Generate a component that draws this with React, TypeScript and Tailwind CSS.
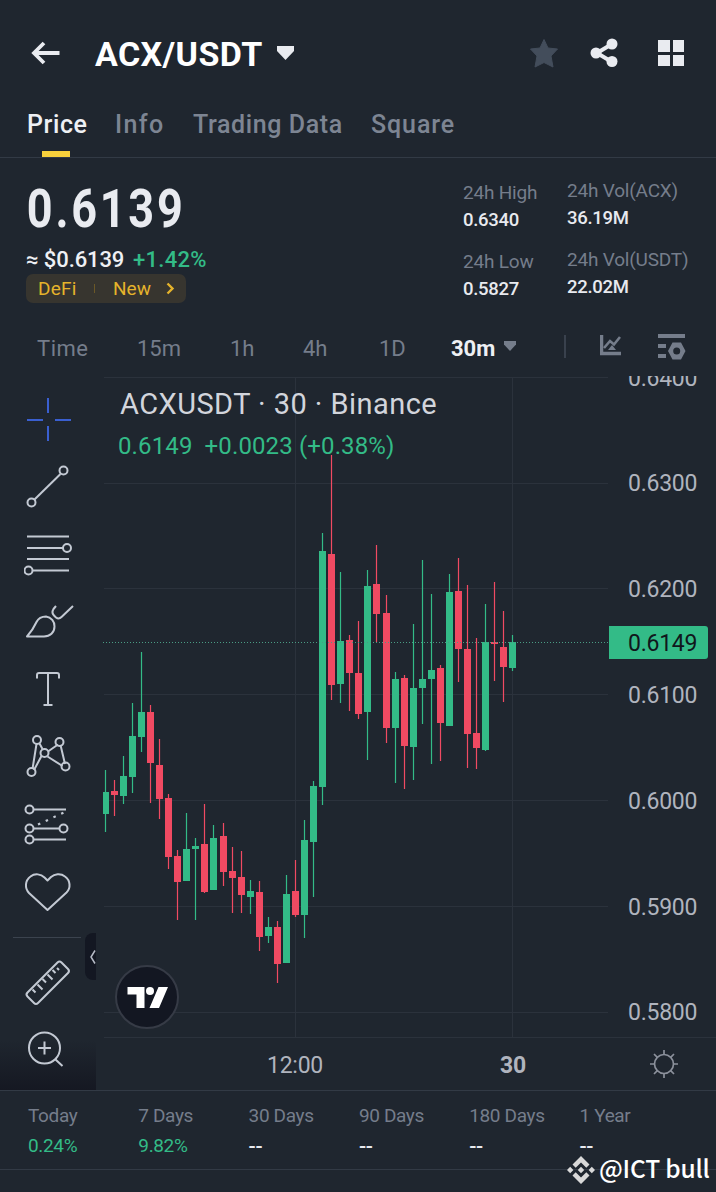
import React from 'react';

const GREEN = '#33bb87';
const RED = '#f04a62';

// center x, high, body top, body bottom, low, rising
const candles: [number, number, number, number, number, boolean][] = [
  [105.5, 770, 792, 814, 832, true],
  [114.5, 780, 791, 795, 816, false],
  [123.5, 756, 776, 796, 804, true],
  [132.5, 703, 736, 777, 793, true],
  [141.5, 652, 712, 737, 752, true],
  [150.5, 705, 712, 763, 803, false],
  [159.5, 739, 765, 799, 819, false],
  [168.5, 794, 798, 857, 869, false],
  [177.5, 850, 856, 882, 920, false],
  [186.5, 813, 849, 881, 881, true],
  [195.5, 838, 846, 849, 920, true],
  [204.5, 804, 844, 892, 893, false],
  [213.5, 825, 838, 890, 890, true],
  [223.5, 823, 836, 872, 886, false],
  [232.5, 847, 871, 878, 913, false],
  [241.5, 851, 877, 895, 913, false],
  [250.5, 880, 891, 897, 914, true],
  [259.5, 881, 892, 937, 951, false],
  [268.5, 917, 927, 936, 943, true],
  [277.5, 921, 927, 964, 983, false],
  [286.5, 875, 894, 963, 963, true],
  [295.5, 860, 891, 915, 917, false],
  [304.5, 820, 840, 915, 938, true],
  [313.5, 781, 786, 842, 897, true],
  [322.5, 533, 551, 787, 805, true],
  [331.5, 455, 554, 685, 700, false],
  [340.5, 572, 641, 684, 703, true],
  [349.5, 635, 640, 673, 711, false],
  [358.5, 621, 673, 714, 719, false],
  [367.5, 570, 586, 712, 760, true],
  [376.5, 545, 584, 614, 642, false],
  [386.5, 595, 613, 728, 743, false],
  [395.5, 672, 679, 728, 783, true],
  [404.5, 675, 678, 746, 789, false],
  [413.5, 624, 688, 747, 780, true],
  [422.5, 560, 679, 688, 724, true],
  [431.5, 594, 670, 679, 764, true],
  [440.5, 665, 668, 723, 761, false],
  [449.5, 574, 592, 726, 726, true],
  [458.5, 558, 591, 649, 682, false],
  [467.5, 585, 649, 734, 768, false],
  [476.5, 638, 733, 748, 769, false],
  [485.5, 604, 642, 750, 751, true],
  [494.5, 582, 642, 644, 681, false],
  [503.5, 611, 647, 667, 702, false],
  [512.5, 635, 642, 668, 671, true],
];

const tools = [
  { name: 'cross', icon: <path d="M24 3v15M24 31v15M3 25h16M31 25h16" stroke="#3a5fd0" /> },
  {
    name: 'trend line',
    icon: (
      <>
        <path d="M10.500 37.500 36.500 12" />
        <circle cx="7.500" cy="40.500" r="4" />
        <circle cx="39.500" cy="8.500" r="4" />
      </>
    ),
  },
  {
    name: 'fib',
    icon: (
      <>
        <path d="M3 6.500h42M3 18h37M3 29h42M9 40.500h36" />
        <circle cx="43" cy="18" r="4" />
        <circle cx="4.500" cy="40.500" r="4" />
      </>
    ),
  },
  {
    name: 'brush',
    icon: (
      <>
        <path d="M3 39.500c4-4.500 7-9 9.500-14.500 2-4 5.500-5.500 9.500-5.500a9.500 9.500 0 0 1 8.500 10c0 6-4.500 10-10.500 10z" />
        <path d="m49 9-11.500 11c-2 2-3.500 2-5.500.500l-2-2c-2-2-2-4-.500-6.500l2.500-3" />
      </>
    ),
  },
  { name: 'text', icon: <path d="M13 13.500V10q0-2 2-2h18q2 0 2 2v3.500M24 8v32M19.500 40h9" /> },
  {
    name: 'pattern',
    icon: (
      <>
        <path d="M12.500 12 8.500 37M15.500 11.500 18.500 17M24 19.500l10-7M17.500 24 10 38M23.500 24.500l15 9.500M36.500 13 41 32" />
        <circle cx="13" cy="8" r="4" />
        <circle cx="35.500" cy="10" r="4" />
        <circle cx="20.500" cy="21" r="4" />
        <circle cx="7.500" cy="40" r="4" />
        <circle cx="41.500" cy="34.500" r="4" />
      </>
    ),
  },
  {
    name: 'forecast',
    icon: (
      <>
        <path d="M9 9.500h33M9 28.500h26M9 39.500h33" />
        <path d="m14 24.500 26-12" strokeDasharray="2.500 6" strokeWidth="2.200" />
        <circle cx="5.500" cy="9.500" r="4" />
        <circle cx="5.500" cy="28.500" r="4" />
        <circle cx="39.500" cy="28.500" r="4" />
        <circle cx="5.500" cy="39.500" r="4" />
      </>
    ),
  },
  {
    name: 'heart',
    icon: <path d="m23.500 13.500-3-3C17 7 11 6 6.500 9.500 1 13.500.500 21 5 26l18.500 17L42.500 25.500C47 21 46.500 13.500 41 9.500c-4.500-3.500-10.500-2.500-14 .500z" />,
  },
];

const lowerTools = [
  {
    name: 'ruler',
    icon: (
      <>
        <path d="M3.500 34.500 33.500 4.500q2-2 4 0l6.500 6.500q2 2 0 4L14 45q-2 2-4 0l-6.500-6.500q-2-2 0-4z" />
        <path d="m8.500 31.500 3 3M13.500 26.500l5 5M18.500 21l3.500 3.500M23.500 16.500l5 5M28.500 12l3 3M33 10l2 2" />
      </>
    ),
  },
  {
    name: 'zoom',
    icon: (
      <>
        <circle cx="20.500" cy="23" r="15.500" />
        <path d="M20.500 16.500v13M14 23h13M31.500 34.500l7 6.500" />
      </>
    ),
  },
];

const ToolIcon = ({ children }: { children: React.ReactNode }) => (
  <svg width="50" height="50" viewBox="0 0 50 50" fill="none" stroke="#c3c9d3" strokeWidth="2" strokeLinejoin="round">
    {children}
  </svg>
);

const Header = () => (
  <header className="flex h-[104px] items-center pl-[31px] pr-8 pt-0.5">
    <svg width="29" height="24" viewBox="0 0 29 24" fill="none" stroke="#e9ebf0" strokeWidth="3.800">
      <path d="M28.500 12H3M13 2 3 12l10 10" />
    </svg>
    <h1 className="ml-[35px] w-[168px] whitespace-nowrap pt-0.5 text-[34px] font-bold leading-none tracking-[0.400px] text-white">ACX/USDT</h1>
    <svg className="ml-[13px]" width="20" height="14" viewBox="0 0 20 14" fill="#e9ebf0">
      <path d="M1 0h17v5l-8.500 9L1 5z" />
    </svg>
    <div className="ml-auto flex items-center">
      <svg width="28" height="30" viewBox="0 0 28 30" fill="#434d5b" stroke="#434d5b" strokeWidth="1" strokeLinejoin="round">
        <path d="m14 1.500 4 8.500 9.500 1-6.500 7 2 11-9-4.500L5 29l2-11L.500 11l9.500-1z" />
      </svg>
      <svg className="ml-8" width="30" height="30" viewBox="0 0 30 30" fill="#e9ebf0">
        <path d="M7 15 22 6M7 15l15 9" stroke="#e9ebf0" strokeWidth="4" />
        <circle cx="6" cy="15" r="5.500" />
        <circle cx="22" cy="6" r="5.500" />
        <circle cx="22" cy="23.500" r="5.500" />
      </svg>
      <div className="ml-[38px] grid grid-cols-2 gap-[3px]">
        <i className="size-[11.5px] bg-[#e9ebf0]" />
        <i className="size-[11.5px] bg-[#e9ebf0]" />
        <i className="size-[11.5px] bg-[#e9ebf0]" />
        <i className="size-[11.5px] bg-[#e9ebf0]" />
      </div>
    </div>
  </header>
);

const Tabs = () => (
  <nav className="flex h-[54px] border-b border-[#323a45] pl-[27px] text-[25px] font-medium leading-[42px] tracking-[0.6px] text-[#7d8593]">
    <div className="flex w-[88px] flex-col text-[#eef0f4]">
      <a className="h-[47px] whitespace-nowrap">Price</a>
      <span className="ml-[15px] h-[6px] w-7 bg-[#f8d13c]" />
    </div>
    <a className="w-[78px] whitespace-nowrap tracking-[1.4px]">Info</a>
    <a className="w-[178px] whitespace-nowrap">Trading Data</a>
    <a className="whitespace-nowrap tracking-[0.9px]">Square</a>
  </nav>
);

const Stat = ({ label, value }: { label: string; value: string }) => (
  <div className="h-[69px] whitespace-nowrap">
    <div className="text-[19px] leading-[26px] tracking-[-0.2px] text-[#757d8b]">{label}</div>
    <div className="text-[18.5px] font-medium leading-[28px] tracking-[-0.3px] text-[#e8eaef]">{value}</div>
  </div>
);

const Summary = () => (
  <section className="flex h-[162px] pl-[26px]">
    <div className="w-[437px] pt-5">
      <div className="h-[65px] w-[180px] origin-left scale-x-[0.85] whitespace-nowrap pl-px text-[53px] font-bold leading-[62px] tracking-[3.2px] text-[#e9ebf0]">0.6139</div>
      <div className="flex h-[31px] gap-[9px] whitespace-nowrap text-[22px] font-medium leading-[34px] text-[#eef0f4]">
        <span className="w-[98px] tracking-[-0.1px]">≈ $0.6139</span>
        <span className="tracking-[0.3px] text-[#33bb87]">+1.42%</span>
      </div>
      <div className="flex h-[29px] w-[160px] items-center rounded-[7px] bg-[#37352f] pl-3 text-[19px] text-[#e5b32b]">
        <span className="w-[56px] pt-px tracking-[0.2px]">DeFi</span>
        <i className="h-[9px] w-px bg-[#6b5827]" />
        <span className="ml-[18px] w-[53px] pt-px">New</span>
        <svg width="9" height="13" viewBox="0 0 9 13" fill="none" stroke="#e5b32b" strokeWidth="2.400">
          <path d="m1.500 1.500 5 5-5 5" />
        </svg>
      </div>
    </div>
    <div className="w-[104px] pt-[22px]">
      <Stat label="24h High" value="0.6340" />
      <Stat label="24h Low" value="0.5827" />
    </div>
    <div className="pt-5">
      <Stat label="24h Vol(ACX)" value="36.19M" />
      <Stat label="24h Vol(USDT)" value="22.02M" />
    </div>
  </section>
);

const Intervals = () => (
  <div className="flex h-14 items-center whitespace-nowrap pl-[37px] text-[22px] text-[#757d8b]">
    <span className="w-[100px] tracking-[0.5px]">Time</span>
    <span className="w-[93px]">15m</span>
    <span className="w-[73px]">1h</span>
    <span className="w-[76px]">4h</span>
    <span className="w-[72px]">1D</span>
    <span className="w-[52px] font-bold text-[#eef0f4]">30m</span>
    <svg className="-mt-1" width="14" height="11" viewBox="0 0 14 11" fill="#757d8b">
      <path d="M1 0h12v3.500L7 10 1 3.500z" />
    </svg>
    <i className="-mt-1 ml-[47px] h-[23px] w-[1.5px] bg-[#39414d]" />
    <svg className="-mt-1.5 ml-[34px]" width="21" height="21" viewBox="0 0 21 21" fill="none" stroke="#757d8b">
      <path d="M1.500 0v18.500H21" strokeWidth="3.500" />
      <path d="m4 13 6-7 4 3.500L20 2" strokeWidth="2.600" />
      <path d="m8 15 4-5 4 5z" fill="#757d8b" stroke="none" />
    </svg>
    <svg className="-mt-[3px] ml-[37px]" width="28" height="28" viewBox="0 0 28 28" fill="#757d8b">
      <path d="M0 1h27v4H0zM0 11h8v4H0zM0 21h8v4H0z" />
      <path fillRule="evenodd" d="m14.500 9.500 8.500 0 4.500 8.500-4.500 8.500h-8.500L10 18z M18.700 14.500a3.500 3.500 0 1 0 0 7 3.500 3.500 0 0 0 0-7z" />
    </svg>
  </div>
);

const Toolbar = () => (
  <aside className="relative flex h-[714px] w-24 shrink-0 flex-col bg-linear-to-b from-transparent from-93% to-[#151822]">
    <div className="flex flex-col pt-[10px] pl-6">
      {tools.map((tool) => (
        <button key={tool.name} className="flex h-[67.5px] items-center">
          <ToolIcon>{tool.icon}</ToolIcon>
        </button>
      ))}
    </div>
    <i className="ml-[13px] mt-[11px] h-px w-[68px] shrink-0 bg-[#3b434e]" />
    <div className="flex flex-col pt-[11px] pl-6">
      {lowerTools.map((tool) => (
        <button key={tool.name} className="flex h-[67px] items-center">
          <ToolIcon>{tool.icon}</ToolIcon>
        </button>
      ))}
    </div>
    <div className="absolute right-0 top-[557px] flex h-[47px] w-[11px] items-center justify-end rounded-l-lg bg-[#131722]">
      <svg width="7" height="16" viewBox="0 0 7 16" fill="none" stroke="#b6bbc6" strokeWidth="1.500">
        <path d="M6 1.500 2 8l4 6.500" />
      </svg>
    </div>
  </aside>
);

const Plot = () => (
  <div className="relative h-[714px] w-[512px] shrink-0">
    <svg className="block" width="512" height="662" viewBox="96 376 512 662">
      <g stroke="#2b323c" strokeWidth="1">
        {[377.5, 483.5, 588.5, 694.5, 800.5, 906.5, 1012.5, 1037.5].map((y) => (
          <line key={y} x1="104" x2="608" y1={y} y2={y} />
        ))}
        <path d="M295.500 377v660M512.500 377v660" />
      </g>
      {candles.map(([x, high, top, bottom, low, up]) => (
        <g key={x} fill={up ? GREEN : RED}>
          <rect x={x - 0.6} y={high} width="1.200" height={low - high} />
          <rect x={Math.max(x - 3.5, 103)} y={top} width={x < 106 ? 6 : 7} height={bottom - top} />
        </g>
      ))}
      <path d="M103 642.500h505" stroke="#4a9c84" strokeDasharray="1 2" />
      <circle cx="147" cy="997" r="31" fill="#131722" stroke="#363b46" strokeWidth="2" />
      <g fill="#fff">
        <path d="M127.500 987h17v21H136.500v-13.500h-9zM158.500 987h9.500l-9 21h-9.500z" />
        <circle cx="150" cy="991" r="4" />
      </g>
    </svg>
    <div className="absolute left-[24px] top-2 whitespace-nowrap text-[29px] leading-[40px] tracking-[0.45px] text-[#d2d5dc]">ACXUSDT · 30 · Binance</div>
    <div className="absolute left-[22px] top-[55px] flex gap-[12px] whitespace-nowrap text-[24px] leading-[30px] tracking-[0.13px] text-[#33bb87]">
      <span>0.6149</span>
      <span>+0.0023 (+0.38%)</span>
    </div>
    <div className="flex h-[52px] items-center pt-1 text-[23px] tracking-[-0.3px] text-[#b0b4be]">
      <span className="w-[398px] text-center">12:00</span>
      <span className="ml-[5px] w-7 text-center font-bold">30</span>
    </div>
  </div>
);

const PriceAxis = () => (
  <div className="relative flex h-[714px] w-[108px] flex-col">
    <div className="h-[662px] overflow-hidden border-b border-[#2b323c]">
      <div className="-mt-[50px] text-[23px] tracking-[-0.25px] text-[#b0b4be]">
        {['0.6400', '0.6300', '0.6200', '0.6100', '0.6000', '0.5900', '0.5800'].map((price) => (
          <div key={price} className="flex h-[105.8px] items-center pl-5">
            {price}
          </div>
        ))}
      </div>
    </div>
    <div className="absolute left-px top-[250px] flex h-[33px] w-[99px] items-center rounded-r-[3px] bg-[#33bb87] pl-[19px] pt-[3px] text-[23px] tracking-[-0.25px] text-[#10171c]">0.6149</div>
    <div className="flex h-[52px] items-center pl-[42px]">
      <svg width="28" height="28" viewBox="0 0 28 28" fill="none" stroke="#8b909b" strokeWidth="1.700">
        <circle cx="14" cy="14" r="9.500" />
        <path d="M14 0v4.500M14 23.500V28M0 14h4.500M23.500 14H28M4 4l3.300 3.300M20.700 20.700 24 24M4 24l3.300-3.300M20.700 7.300 24 4" />
      </svg>
    </div>
  </div>
);

const returns = [
  { label: 'Today', value: '0.24%' },
  { label: '7 Days', value: '9.82%' },
  { label: '30 Days', value: '--' },
  { label: '90 Days', value: '--' },
  { label: '180 Days', value: '--' },
  { label: '1 Year', value: '--' },
];

const Returns = () => (
  <section className="flex h-20 border-y border-[#323a45] pl-7 pt-[9px]">
    {returns.map(({ label, value }) => (
      <div key={label} className="w-[110.3px] whitespace-nowrap text-[19px] tracking-[-0.35px]">
        <div className="leading-[31px] text-[#757d8b]">{label}</div>
        <div className={value === '--' ? 'text-[21px] font-medium leading-[30px] text-[#e8eaef]' : 'leading-[30px] text-[#33bb87]'}>{value}</div>
      </div>
    ))}
  </section>
);

const Watermark = () => (
  <div className="absolute bottom-[8px] left-[567px] flex items-center gap-1 whitespace-nowrap">
    <svg width="28" height="28" viewBox="0 0 28 28" fill="#d9d9d9">
      <path d="m14 0 8.500 8.500-3.200 3.200L14 6.400l-5.300 5.300-3.200-3.200zM14 28l8.500-8.500-3.200-3.200-5.300 5.300-5.300-5.300-3.200 3.200zM3.200 10.800 6.400 14l-3.200 3.200L0 14zM24.800 10.800 28 14l-3.200 3.200-3.200-3.200zM14 10.800l3.200 3.200-3.200 3.200-3.200-3.200z" />
    </svg>
    <span className="-mt-1 font-['Noto_Sans_CJK_SC',sans-serif] text-[24.5px] font-medium leading-[32px] tracking-[-0.2px] text-white">@ICT bull</span>
  </div>
);

const App = () => (
  <main className="relative h-[1192px] w-[716px] overflow-hidden bg-[#1f262f] font-[Roboto,sans-serif]">
    <Header />
    <Tabs />
    <Summary />
    <Intervals />
    <div className="flex">
      <Toolbar />
      <Plot />
      <PriceAxis />
    </div>
    <Returns />
    <Watermark />
  </main>
);

export default App;
